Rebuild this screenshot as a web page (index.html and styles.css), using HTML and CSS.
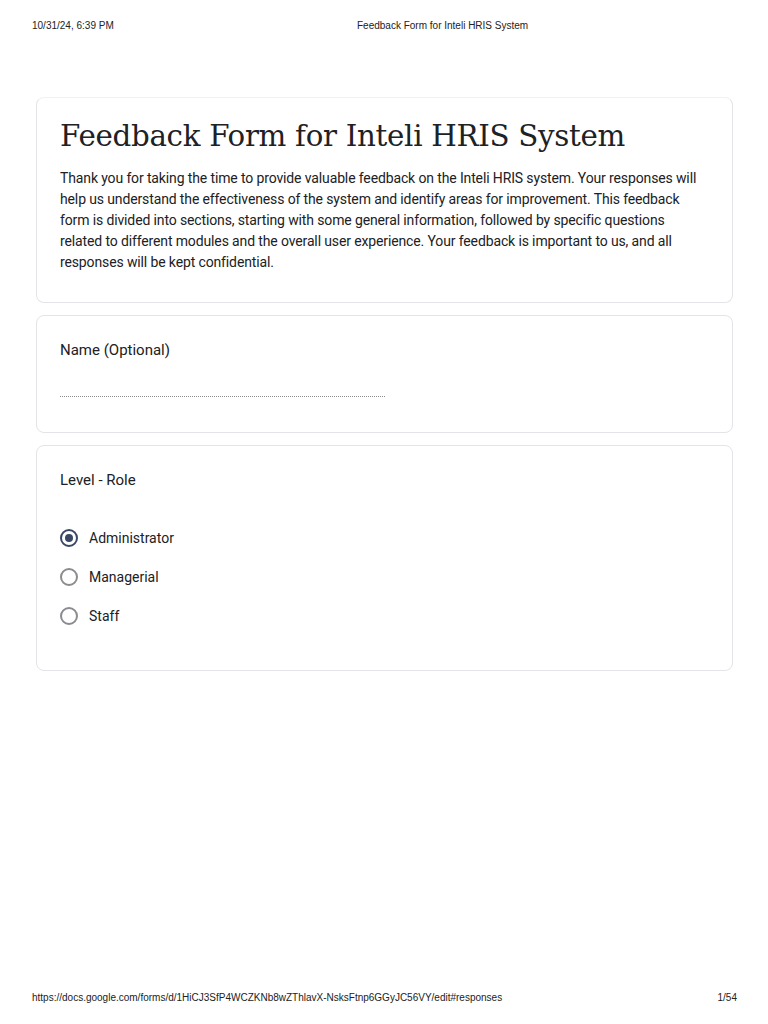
FILE: index.html
```html
<!DOCTYPE html>
<html>
<head>
<meta charset="utf-8">
<link rel="stylesheet" href="styles.css">
</head>
<body>
<div class="page">
  <header class="print-head">
    <span class="date">10/31/24, 6:39 PM</span>
    <span class="doc-title">Feedback Form for Inteli HRIS System</span>
  </header>
  <main class="form">
    <section class="card intro">
      <h1 class="form-title">Feedback Form for Inteli HRIS System</h1>
      <p class="desc">Thank you for taking the time to provide valuable feedback on the Inteli HRIS system. Your responses will help us understand the effectiveness of the system and identify areas for improvement. This feedback form is divided into sections, starting with some general information, followed by specific questions related to different modules and the overall user experience. Your feedback is important to us, and all responses will be kept confidential.</p>
    </section>
    <section class="card q-name">
      <div class="q-label">Name (Optional)</div>
      <div class="answer-line"></div>
    </section>
    <section class="card q-role">
      <div class="q-label">Level - Role</div>
      <ul class="options">
        <li class="opt"><span class="radio checked"></span><span>Administrator</span></li>
        <li class="opt"><span class="radio"></span><span>Managerial</span></li>
        <li class="opt"><span class="radio"></span><span>Staff</span></li>
      </ul>
    </section>
  </main>
  <footer class="print-foot">
    <span class="url">https://docs.google.com/forms/d/1HiCJ3SfP4WCZKNb8wZThlavX-NsksFtnp6GGyJC56VY/edit#responses</span>
    <span class="pagenum">1/54</span>
  </footer>
</div>
</body>
</html>
```
FILE: styles.css
```css
html, body {
  margin: 0;
  padding: 0;
  background: #fff;
}
.page {
  width: 768px;
  height: 1024px;
  display: flex;
  flex-direction: column;
  font-family: Roboto, "Noto Sans", sans-serif;
  color: #202124;
}
.print-head {
  display: flex;
  font-family: "Liberation Sans", Arial, sans-serif;
  font-size: 10px;
  color: #222;
  padding: 20px 0 0 32px;
  height: 16px;
  line-height: 12px;
}
.print-head .date { width: 325px; }
.form {
  flex: 1;
  padding: 0 35px 0 36px;
  margin-top: 61px;
  display: flex;
  flex-direction: column;
  gap: 12px;
}
.card {
  border: 1px solid #e3e4e7;
  border-radius: 8px;
  padding: 0 23px;
  background: #fff;
}
.intro {
  padding-top: 18px;
  padding-bottom: 29px;
  border-top-color: #f1f1f3;
}
.form-title {
  font-family: "DejaVu Serif", "Liberation Serif", serif;
  font-weight: normal;
  font-size: 29.3px;
  line-height: 40px;
  margin: 0 0 12px;
  color: #202124;
  letter-spacing: -0.3px;
}
.desc {
  margin: 0;
  font-size: 14px;
  line-height: 21px;
  letter-spacing: -0.13px;
  color: #202124;
}
.q-name {
  padding-top: 24px;
  height: 92px;
}
.q-label {
  font-size: 15px;
  line-height: 20px;
  color: #202124;
}
.answer-line {
  width: 325px;
  margin-top: 36px;
  border-bottom: 1px dotted #8a8a8a;
}
.q-role {
  padding-top: 24px;
  height: 200px;
}
.options {
  list-style: none;
  margin: 38px 0 0;
  padding: 0;
  display: flex;
  flex-direction: column;
  gap: 19px;
}
.opt {
  display: flex;
  align-items: center;
  gap: 11px;
  font-size: 14px;
  line-height: 20px;
  color: #202124;
}
.radio {
  width: 14px;
  height: 14px;
  border: 2px solid #8a8c90;
  border-radius: 50%;
  box-sizing: content-box;
  position: relative;
  flex: none;
}
.radio.checked {
  border-color: #3b4767;
}
.radio.checked::after {
  content: "";
  position: absolute;
  left: 3px;
  top: 3px;
  width: 8px;
  height: 8px;
  border-radius: 50%;
  background: #3b4767;
}
.print-foot {
  display: flex;
  justify-content: space-between;
  font-family: "Liberation Sans", Arial, sans-serif;
  font-size: 10px;
  line-height: 12px;
  color: #222;
  padding: 0 31px 20px 32px;
}
```
